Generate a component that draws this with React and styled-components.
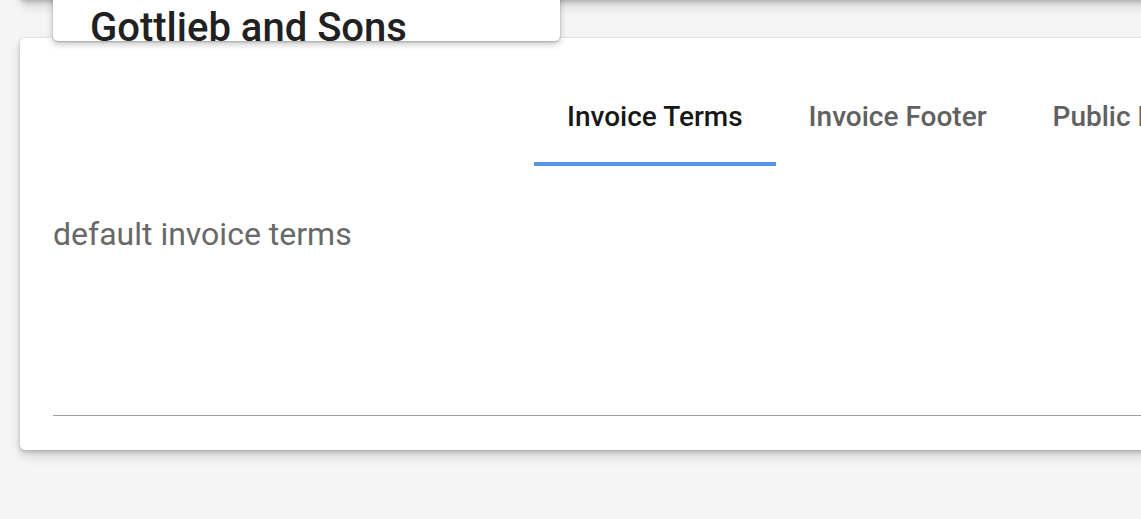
import React, { useState } from "react";
import styled, { createGlobalStyle } from "styled-components";

const Global = createGlobalStyle`
  html, body { margin: 0; padding: 0; background: #f5f5f5; overflow: hidden; }
  body { font-family: Roboto, "Noto Sans", Arial, sans-serif; }
  * { box-sizing: border-box; }
`;

const Page = styled.div`
  position: relative;
  width: 1141px;
  height: 519px;
  overflow: hidden;
  padding: 0 0 0 20px;
  display: flex;
  flex-direction: column;
  gap: 38px;
`;

const Card = styled.section`
  background: #fff;
  border-radius: 5px;
  width: 1300px;
  flex-shrink: 0;
  box-shadow: 0 6px 12px rgba(0, 0, 0, 0.14), 0 2px 4px rgba(0, 0, 0, 0.18),
    0 0 1px rgba(0, 0, 0, 0.22);
`;

const TopCard = styled(Card)`
  height: 60px;
  margin-top: -60px;
`;

const MainCard = styled(Card)`
  height: 412px;
  padding: 0 0 0 33px;
  display: flex;
  flex-direction: column;
`;

const Tabs = styled.div`
  display: flex;
  padding: 40px 0 0 481px;
`;

const Tab = styled.button`
  border: 0;
  background: none;
  height: 88px;
  padding: 0 33px 8px;
  font-family: Roboto, Arial, sans-serif;
  font-size: 28px;
  font-weight: 500;
  white-space: nowrap;
  color: ${(p) => (p.$active ? "rgba(0,0,0,0.92)" : "#616161")};
  border-bottom: 4px solid ${(p) => (p.$active ? "#5b93e9" : "transparent")};
  cursor: pointer;
`;

const Field = styled.div`
  margin-top: 50px;
  height: 200px;
  border-bottom: 1px solid #a0a0a0;
  font-size: 32px;
  line-height: 36px;
  color: #686868;
  white-space: nowrap;
`;

const Popup = styled.div`
  position: absolute;
  left: 53px;
  top: -20px;
  width: 507px;
  height: 61px;
  overflow: hidden;
  background: #fff;
  border-radius: 0 0 5px 5px;
  box-shadow: 0 3px 7px rgba(0, 0, 0, 0.24), 0 1px 2px rgba(0, 0, 0, 0.2);
  padding: 25px 0 0 37px;
`;

const PopupTitle = styled.div`
  font-size: 40px;
  font-weight: 500;
  color: #212121;
  line-height: 46px;
  white-space: nowrap;
`;

export default function App() {
  const [active, setActive] = useState(0);
  const tabs = ["Invoice Terms", "Invoice Footer", "Public Notes"];
  return (
    <>
      <Global />
      <Page>
        <TopCard />
        <MainCard>
          <Tabs>
            {tabs.map((t, i) => (
              <Tab key={t} $active={i === active} onClick={() => setActive(i)}>
                {t}
              </Tab>
            ))}
          </Tabs>
          <Field>default invoice terms</Field>
        </MainCard>
        <Popup>
          <PopupTitle>Gottlieb and Sons</PopupTitle>
        </Popup>
      </Page>
    </>
  );
}
